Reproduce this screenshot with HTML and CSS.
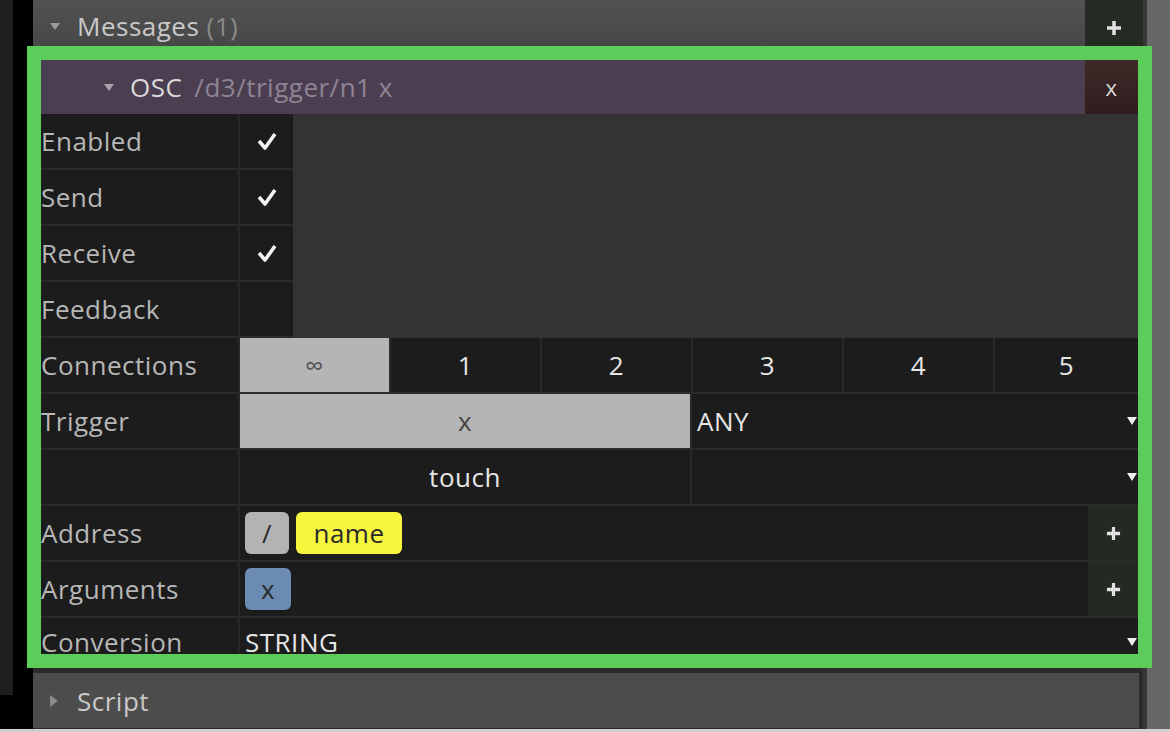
FILE: index.html
```html
<!DOCTYPE html>
<html lang="en">
<head>
    <meta charset="UTF-8">
    <title>Messages inspector</title>
    <link rel="stylesheet" href="styles.css">
</head>
<body>
    <div class="app">
        <div class="side-left"><div class="side-gray"></div></div>
        <div class="panel">
            <div class="section-head">
                <svg class="caret" viewBox="0 0 10 7"><polygon points="0,0 10,0 5,7" fill="#9a9a9a"/></svg>
                <span class="head-title">Messages <span class="dim">(1)</span></span>
                <div class="head-add">
                    <svg class="plus" viewBox="0 0 16 16"><path d="M8 1v14M1 8h14" stroke="#e2e2e2" stroke-width="3.5"/></svg>
                </div>
            </div>
            <div class="section-body">
                <div class="widget">
                    <div class="widget-head">
                        <svg class="caret-sm" viewBox="0 0 10 7"><polygon points="0,0 10,0 5,7" fill="#a9a3ad"/></svg>
                        <span class="osc">OSC</span>
                        <span class="path">/d3/trigger/n1 x</span>
                        <div class="close">x</div>
                    </div>

                    <div class="row">
                        <div class="label">Enabled</div>
                        <div class="check"><svg viewBox="0 0 20 20"><polyline points="2,10 8,17 18,3" fill="none" stroke="#f2f2f2" stroke-width="3.6" stroke-linejoin="round"/></svg></div>
                        <div class="fill"></div>
                    </div>
                    <div class="row">
                        <div class="label">Send</div>
                        <div class="check"><svg viewBox="0 0 20 20"><polyline points="2,10 8,17 18,3" fill="none" stroke="#f2f2f2" stroke-width="3.6" stroke-linejoin="round"/></svg></div>
                        <div class="fill"></div>
                    </div>
                    <div class="row">
                        <div class="label">Receive</div>
                        <div class="check"><svg viewBox="0 0 20 20"><polyline points="2,10 8,17 18,3" fill="none" stroke="#f2f2f2" stroke-width="3.6" stroke-linejoin="round"/></svg></div>
                        <div class="fill"></div>
                    </div>
                    <div class="row">
                        <div class="label">Feedback</div>
                        <div class="check"></div>
                        <div class="fill"></div>
                    </div>

                    <div class="row">
                        <div class="label">Connections</div>
                        <div class="value">
                            <div class="seg on">&infin;</div>
                            <div class="seg">1</div>
                            <div class="seg">2</div>
                            <div class="seg">3</div>
                            <div class="seg">4</div>
                            <div class="seg">5</div>
                        </div>
                    </div>
                    <div class="row">
                        <div class="label">Trigger</div>
                        <div class="value">
                            <div class="half btn-light">x</div>
                            <div class="select"><span>ANY</span><svg class="drop" viewBox="0 0 10 8"><polygon points="0,0 10,0 5,8" fill="#eee"/></svg></div>
                        </div>
                    </div>
                    <div class="row">
                        <div class="label"></div>
                        <div class="value">
                            <div class="half">touch</div>
                            <div class="select"><span></span><svg class="drop" viewBox="0 0 10 8"><polygon points="0,0 10,0 5,8" fill="#eee"/></svg></div>
                        </div>
                    </div>
                    <div class="row">
                        <div class="label">Address</div>
                        <div class="value">
                            <div class="chips">
                                <div class="chip slash">/</div>
                                <div class="chip name">name</div>
                            </div>
                            <div class="add-small"><svg class="plus" viewBox="0 0 16 16"><path d="M8 1v14M1 8h14" stroke="#e2e2e2" stroke-width="3.5"/></svg></div>
                        </div>
                    </div>
                    <div class="row">
                        <div class="label">Arguments</div>
                        <div class="value">
                            <div class="chips">
                                <div class="chip arg">x</div>
                            </div>
                            <div class="add-small"><svg class="plus" viewBox="0 0 16 16"><path d="M8 1v14M1 8h14" stroke="#e2e2e2" stroke-width="3.5"/></svg></div>
                        </div>
                    </div>
                    <div class="row last">
                        <div class="label">Conversion</div>
                        <div class="value">
                            <div class="select plain"><span>STRING</span><svg class="drop" viewBox="0 0 10 8"><polygon points="0,0 10,0 5,8" fill="#eee"/></svg></div>
                        </div>
                    </div>
                </div>
            </div>
            <div class="section-head script">
                <svg class="caret-right" viewBox="0 0 8 12"><polygon points="0,0 8,6 0,12" fill="#8c8c8c"/></svg>
                <span>Script</span>
            </div>
        </div>
        <div class="scrollbar"></div>
    </div>
</body>
</html>
```

FILE: styles.css
```css
* {
    box-sizing: border-box;
}
body {
    margin: 0;
    width: 1170px;
    height: 732px;
    overflow: hidden;
    background: #cfcfcf;
    font-family: "Open Sans", "DejaVu Sans", sans-serif;
    font-size: 26px;
    letter-spacing: 0.5px;
    color: #e6e6e6;
}
.app {
    display: flex;
    height: 729px;
}
.side-left {
    width: 33px;
    background: #000;
}
.side-gray {
    width: 13px;
    height: 695px;
    background: #1f1f1f;
}
.panel {
    width: 1110px;
    background: #2b2b2b;
    display: flex;
    flex-direction: column;
}
.scrollbar {
    width: 27px;
    background: #676767;
    border-left: 4px solid #383838;
}

/* collapsible section headers */
.section-head {
    height: 46px;
    display: flex;
    align-items: center;
    padding-left: 17px;
    background: linear-gradient(#525252, #474747);
    color: #c9c9c9;
}
.section-head .dim {
    color: #8a8a8a;
}
.head-title {
    padding-top: 6px;
}
.caret {
    width: 10px;
    height: 7px;
    margin-top: 6px;
    margin-right: 17px;
}
.head-add {
    margin-left: auto;
    width: 58px;
    height: 46px;
    padding-top: 10px;
    background: #232b22;
    display: flex;
    align-items: center;
    justify-content: center;
}
.plus {
    width: 16px;
    height: 16px;
}
.add-small .plus {
    width: 15px;
    height: 15px;
}
.section-head.script {
    height: 55px;
    margin-right: 4px;
    background: #4c4c4c;
}
.caret-right {
    width: 8px;
    height: 12px;
    margin-right: 19px;
}
.section-body {
    padding: 14px 5px 19px 8px;
}

/* widget box */
.widget {
    position: relative;
    z-index: 1;
    height: 594px;
    overflow: hidden;
    background: #1c1c1c;
    outline: 14px solid #5ccd5a;
}
.widget-head {
    height: 54px;
    display: flex;
    align-items: center;
    padding-left: 63px;
    background: #4b3e51;
}
.caret-sm {
    width: 10px;
    height: 7px;
    margin-right: 16px;
}
.osc {
    color: #d8d8d8;
}
.path {
    margin-left: 12px;
    color: #8e8494;
}
.close {
    margin-left: auto;
    width: 53px;
    height: 54px;
    display: flex;
    align-items: center;
    justify-content: center;
    background: linear-gradient(#3e2828, #301e1e);
    color: #dcdcdc;
    font-size: 22px;
}

/* rows */
.row {
    display: flex;
    height: 56px;
}
.label {
    width: 199px;
    height: 56px;
    display: flex;
    align-items: center;
    border-right: 2px solid #272727;
    border-bottom: 2px solid #2a2a2a;
    color: #b7b7b7;
    white-space: nowrap;
}
.row.last .label,
.row.last .select {
    padding-bottom: 6px;
}
.check {
    width: 53px;
    height: 56px;
    display: flex;
    align-items: center;
    justify-content: center;
    border-bottom: 2px solid #2a2a2a;
}
.check svg {
    width: 20px;
    height: 20px;
}
.fill {
    flex: 1;
    height: 56px;
    background: #333;
}
.value {
    flex: 1;
    display: flex;
    height: 56px;
    border-bottom: 2px solid #2a2a2a;
}
.seg {
    flex: 0 0 151px;
    display: flex;
    align-items: center;
    justify-content: center;
    border-left: 2px solid #2a2a2a;
}
.seg:first-child {
    flex-basis: 149px;
    border-left: none;
}
.seg:last-child {
    flex: 1;
}
.seg.on {
    background: #b5b5b5;
    color: #555;
}
.half {
    width: 450px;
    display: flex;
    align-items: center;
    justify-content: center;
}
.btn-light {
    background: #b5b5b5;
    color: #444;
}
.select {
    flex: 1;
    display: flex;
    align-items: center;
    justify-content: space-between;
    padding: 0 1px 0 5px;
    border-left: 2px solid #2a2a2a;
}
.select.plain {
    border-left: none;
}
.drop {
    width: 10px;
    height: 8px;
}
.chips {
    flex: 1;
    display: flex;
    align-items: center;
    gap: 7px;
    padding-left: 5px;
}
.chip {
    height: 42px;
    border-radius: 6px;
    display: flex;
    align-items: center;
    justify-content: center;
    color: #2a2a2a;
}
.chip.slash {
    width: 44px;
    background: #b3b3b3;
}
.chip.name {
    width: 106px;
    background: #f6f63e;
}
.chip.arg {
    width: 46px;
    background: #6c8bb2;
}
.add-small {
    width: 50px;
    display: flex;
    align-items: center;
    justify-content: center;
    background: #222a21;
}
```
